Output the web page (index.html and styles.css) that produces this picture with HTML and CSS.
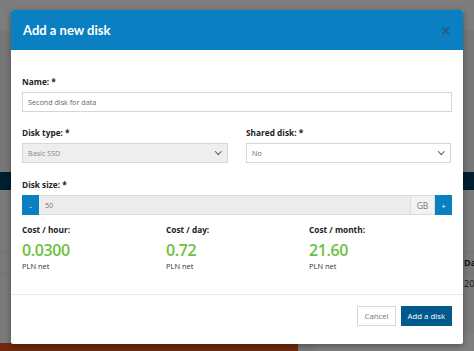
FILE: index.html
```html
<!DOCTYPE html>
<html lang="en">
<head>
    <meta charset="UTF-8">
    <meta name="viewport" content="width=device-width, initial-scale=1.0">
    <title>Add a new disk</title>
    <link rel="stylesheet" href="styles.css">
</head>
<body>
    <div class="page">
        <div class="page-top"></div>
        <div class="page-mid"></div>
        <div class="page-band"></div>
        <div class="page-rows">
            <div class="page-row"><span class="page-cell head">Date</span></div>
            <div class="page-row"><span class="page-cell">2019</span></div>
        </div>
        <div class="page-bottom">
            <div class="page-orange"></div>
            <div class="page-side">DISKS</div>
        </div>
    </div>
    <div class="overlay"></div>

    <div class="modal">
        <div class="modal-header">
            <h1>Add a new disk</h1>
            <span class="close">&times;</span>
        </div>
        <div class="modal-body">
            <div class="field">
                <label>Name: *</label>
                <input class="form-control" type="text" value="Second disk for data">
            </div>
            <div class="row">
                <div class="field">
                    <label>Disk type: *</label>
                    <div class="select disabled">Basic SSD<span class="caret"></span></div>
                </div>
                <div class="field">
                    <label>Shared disk: *</label>
                    <div class="select">No<span class="caret"></span></div>
                </div>
            </div>
            <div class="field">
                <label>Disk size: *</label>
                <div class="input-group">
                    <button class="btn-step">-</button>
                    <div class="size-value">50</div>
                    <div class="addon">GB</div>
                    <button class="btn-step">+</button>
                </div>
            </div>
            <div class="costs">
                <div class="cost">
                    <label>Cost / hour:</label>
                    <div class="cost-value">0.0300</div>
                    <div class="cost-unit">PLN net</div>
                </div>
                <div class="cost">
                    <label>Cost / day:</label>
                    <div class="cost-value">0.72</div>
                    <div class="cost-unit">PLN net</div>
                </div>
                <div class="cost">
                    <label>Cost / month:</label>
                    <div class="cost-value">21.60</div>
                    <div class="cost-unit">PLN net</div>
                </div>
            </div>
        </div>
        <div class="modal-footer">
            <button class="btn btn-default">Cancel</button>
            <button class="btn btn-primary">Add a disk</button>
        </div>
    </div>
</body>
</html>
```

FILE: styles.css
```css
body {
    margin: 0;
    font-family: "Open Sans", Arial, sans-serif;
    width: 474px;
    height: 351px;
    overflow: hidden;
    position: relative;
    background: #fff;
}
.page {
    height: 351px;
    display: flex;
    flex-direction: column;
    background: #f4f4f4;
}
.page-top {
    height: 30px;
    background: #fafafa;
}
.page-mid {
    height: 142px;
    background: #efefef;
}
.page-band {
    height: 18px;
    background: #003c63;
}
.page-rows {
    flex: 1;
    padding-top: 62px;
}
.page-row {
    height: 20px;
    border-top: 1px solid #e4e4e4;
    text-align: right;
}
.page-cell {
    display: inline-block;
    width: 10px;
    overflow: hidden;
    font-size: 9px;
    line-height: 20px;
    color: #333;
}
.page-cell.head {
    font-weight: 700;
}
.page-bottom {
    margin-top: auto;
    height: 18px;
    display: flex;
    align-items: flex-end;
}
.page-orange {
    width: 298px;
    height: 8px;
    background: #e0521b;
}
.page-side {
    margin-left: 18px;
    flex: 1;
    height: 18px;
    background: #fff;
    font-size: 11px;
    font-weight: 800;
    color: #222;
    padding-left: 12px;
    line-height: 14px;
}
.overlay {
    position: absolute;
    inset: 0;
    background: rgba(0, 0, 0, 0.5);
}
.modal {
    position: absolute;
    left: 11px;
    top: 10px;
    width: 452px;
    background: #fff;
    border-radius: 2px;
    box-shadow: 0 2px 6px rgba(0, 0, 0, 0.35);
}
.modal-header {
    height: 40px;
    background: #0a80c2;
    display: flex;
    align-items: center;
    justify-content: space-between;
    padding: 0 12px;
    border-radius: 2px 2px 0 0;
}
.modal-header h1 {
    margin: 0;
    font-family: Lato, "Open Sans", sans-serif;
    font-size: 13px;
    font-weight: 700;
    color: #fff;
}
.close {
    font-size: 17px;
    line-height: 1;
    color: #2a5d80;
    font-weight: 700;
}
.modal-body {
    padding: 26px 11px 0 11px;
}
label {
    display: block;
    font-size: 8.3px;
    font-weight: 700;
    color: #222;
    margin-bottom: 5px;
}
.field {
    margin-bottom: 15px;
}
.row .field {
    margin-bottom: 16px;
}
.form-control {
    display: block;
    box-sizing: border-box;
    width: 100%;
    height: 20px;
    border: 1px solid #d6d6d6;
    padding: 0 5px;
    font-family: inherit;
    font-size: 7.2px;
    color: #666;
    outline: none;
}
.row {
    display: grid;
    grid-template-columns: 206px 205px;
    column-gap: 18px;
}
.select {
    box-sizing: border-box;
    height: 20px;
    border: 1px solid #d6d6d6;
    padding: 0 5px;
    font-size: 7.2px;
    color: #666;
    display: flex;
    align-items: center;
    justify-content: space-between;
}
.select.disabled {
    background: #eee;
    color: #888;
}
.caret {
    width: 3.5px;
    height: 3.5px;
    border-right: 1px solid #555;
    border-bottom: 1px solid #555;
    transform: rotate(45deg);
    margin: 0 2px 3px 0;
}
.input-group {
    display: flex;
    height: 20px;
}
.btn-step {
    width: 17px;
    border: none;
    background: #0a80c2;
    color: #fff;
    font-family: inherit;
    font-size: 8px;
    padding: 0;
}
.size-value {
    flex: 1;
    background: #ececec;
    border-top: 1px solid #dcdcdc;
    border-bottom: 1px solid #dcdcdc;
    font-size: 7.2px;
    color: #777;
    padding-left: 6px;
    display: flex;
    align-items: center;
}
.addon {
    width: 25px;
    background: #f2f2f2;
    border: 1px solid #dcdcdc;
    box-sizing: border-box;
    font-size: 8.5px;
    color: #777;
    display: flex;
    align-items: center;
    justify-content: center;
}
.costs {
    display: grid;
    grid-template-columns: 144px 143px 1fr;
    margin-top: -6px;
    padding-bottom: 23px;
}
.cost label {
    margin-bottom: 5px;
}
.cost-value {
    font-size: 16px;
    font-weight: 600;
    letter-spacing: -0.4px;
    color: #6cbf3f;
    line-height: 21px;
}
.cost-unit {
    font-size: 7.5px;
    color: #333;
    margin-top: 0;
}
.modal-footer {
    border-top: 1px solid #e8e8e8;
    height: 38px;
    display: flex;
    align-items: flex-start;
    justify-content: flex-end;
    gap: 5px;
    padding: 11px 11px 0 11px;
}
.btn {
    height: 20px;
    font-family: inherit;
    font-size: 7.8px;
    border-radius: 0;
    padding: 0 6px;
}
.btn-default {
    background: #fff;
    border: 1px solid #d6d6d6;
    color: #777;
}
.btn-primary {
    background: #005a8e;
    border: 1px solid #005a8e;
    color: #fff;
}
```
